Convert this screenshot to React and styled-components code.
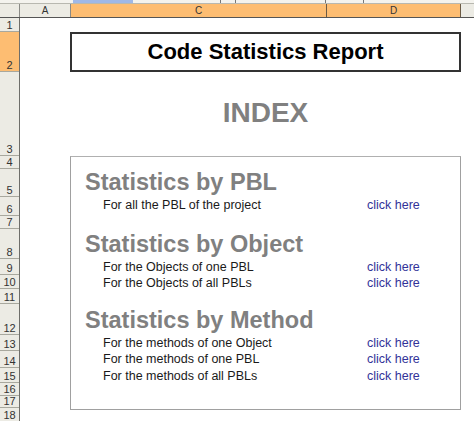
import React from 'react'
import styled, {createGlobalStyle} from 'styled-components'

const GlobalStyle = createGlobalStyle`
    html, body {
        margin: 0;
        padding: 0;
        background: #ffffff;
        font-family: 'Liberation Sans', Arial, sans-serif;
    }
`

const rowHeights = [14, 40, 84, 13, 28, 19, 13, 30, 16, 14, 15, 31, 16, 17, 15, 13, 12, 14]
const columns = [
    {name: 'A', width: 51},
    {name: 'C', width: 256, selected: true},
    {name: 'D', width: 134, selected: true},
]

const sections = [
    {
        title: 'Statistics by PBL',
        height: 28,
        lines: [{text: 'For all the PBL of the project', height: 19, lift: 4}],
        gap: 13,
    },
    {
        title: 'Statistics by Object',
        height: 30,
        lines: [
            {text: 'For the Objects of one PBL', height: 16, lift: 2},
            {text: 'For the Objects of all PBLs', height: 14, lift: 1},
        ],
        gap: 15,
    },
    {
        title: 'Statistics by Method',
        height: 31,
        lines: [
            {text: 'For the methods of one Object', height: 16, lift: 2},
            {text: 'For the methods of one PBL', height: 17, lift: 3},
            {text: 'For the methods of all PBLs', height: 15, lift: 1},
        ],
        gap: 25,
    },
]

export default function App(){
    return (
        <Page>
            <GlobalStyle />
            <TopStrip>
                <TabMark />
                <Tick $left={87} />
                <Tick $left={14} />
                <Tick $left={89} />
                <Tick $left={37} />
            </TopStrip>
            <HeaderRow>
                <Corner />
                {columns.map(c => (
                    <ColHead key={c.name} $width={c.width} $selected={c.selected}>{c.name}</ColHead>
                ))}
                <ColFill />
            </HeaderRow>
            <Body>
                <RowHeads>
                    {rowHeights.map((h, i) => (
                        <RowHead key={i} $height={h} $selected={i === 1}>{i + 1}</RowHead>
                    ))}
                </RowHeads>
                <Sheet>
                    <Spacer $height={14} />
                    <TitleBox>Code Statistics Report</TitleBox>
                    <IndexCell>INDEX</IndexCell>
                    <IndexBox>
                        <Spacer $height={13} />
                        {sections.map(s => (
                            <React.Fragment key={s.title}>
                                <Heading $height={s.height}>{s.title}</Heading>
                                {s.lines.map(l => (
                                    <Line key={l.text} $height={l.height} $lift={l.lift}>
                                        <Label>{l.text}</Label>
                                        <Link>click here</Link>
                                    </Line>
                                ))}
                                <Spacer $height={s.gap} />
                            </React.Fragment>
                        ))}
                    </IndexBox>
                </Sheet>
            </Body>
        </Page>
    )
}

const Page = styled.div`
    width: 474px;
    height: 421px;
    overflow: hidden;
    background: #ffffff;
`
const TopStrip = styled.div`
    display: flex;
    height: 3px;
    border-bottom: 1px solid #b8b8b0;
    background: #f4f3ee;
`
const TabMark = styled.div`
    width: 60px;
    margin-left: 73px;
    background: #9fb8e8;
`
const Tick = styled.div`
    width: 1px;
    margin-left: ${p => p.$left}px;
    background: #777;
`
const HeaderRow = styled.div`
    display: flex;
    height: 13px;
    border-bottom: 1px solid #555;
    font-size: 10px;
    color: #333;
`
const Corner = styled.div`
    width: 19px;
    background: #ecebe4;
    border-right: 1px solid #8a8a86;
`
const ColHead = styled.div`
    width: ${p => p.$width - 1}px;
    display: flex;
    align-items: center;
    justify-content: center;
    background: ${p => p.$selected ? '#fdbd72' : '#ecebe4'};
    border-right: 1px solid ${p => p.$selected ? '#6b5a44' : '#8a8a86'};
`
const ColFill = styled.div`
    flex: 1;
    background: #ecebe4;
`
const Body = styled.div`
    display: flex;
`
const RowHeads = styled.div`
    display: flex;
    flex-direction: column;
    width: 19px;
    border-right: 1px solid #6e6e6a;
`
const RowHead = styled.div`
    height: ${p => p.$height - 1}px;
    display: flex;
    align-items: flex-end;
    justify-content: center;
    background: ${p => p.$selected ? '#fdbd72' : '#ecebe4'};
    border-bottom: 1px solid #a8a89e;
    font-size: 11px;
    line-height: 11px;
    color: #333;
`
const Sheet = styled.div`
    flex: 1;
    display: flex;
    flex-direction: column;
`
const Spacer = styled.div`
    height: ${p => p.$height}px;
`
const TitleBox = styled.div`
    box-sizing: border-box;
    height: 40px;
    width: 391px;
    margin-left: 50px;
    border: 2px solid #333;
    display: flex;
    align-items: center;
    justify-content: center;
    font-size: 22px;
    font-weight: bold;
    color: #000;
`
const IndexCell = styled.div`
    height: 84px;
    width: 391px;
    margin-left: 50px;
    box-sizing: border-box;
    padding-top: 25px;
    text-align: center;
    font-size: 28px;
    font-weight: bold;
    color: #808080;
`
const IndexBox = styled.div`
    box-sizing: border-box;
    width: 391px;
    margin-left: 50px;
    border: 1px solid #a0a0a0;
    border-top-color: #b0b0b0;
`
const Heading = styled.div`
    box-sizing: border-box;
    height: ${p => p.$height}px;
    display: flex;
    align-items: flex-end;
    padding: 0 0 3px 14px;
    font-size: 23.5px;
    font-weight: bold;
    line-height: 26px;
    color: #808080;
    white-space: nowrap;
`
const Line = styled.div`
    box-sizing: border-box;
    height: ${p => p.$height}px;
    padding-bottom: ${p => p.$lift}px;
    display: grid;
    grid-template-columns: 256px 1fr;
    align-items: end;
    font-size: 12.5px;
    line-height: 15px;
`
const Label = styled.div`
    padding-left: 32px;
    color: #1a1a1a;
`
const Link = styled.div`
    padding-left: 40px;
    color: #333399;
`
